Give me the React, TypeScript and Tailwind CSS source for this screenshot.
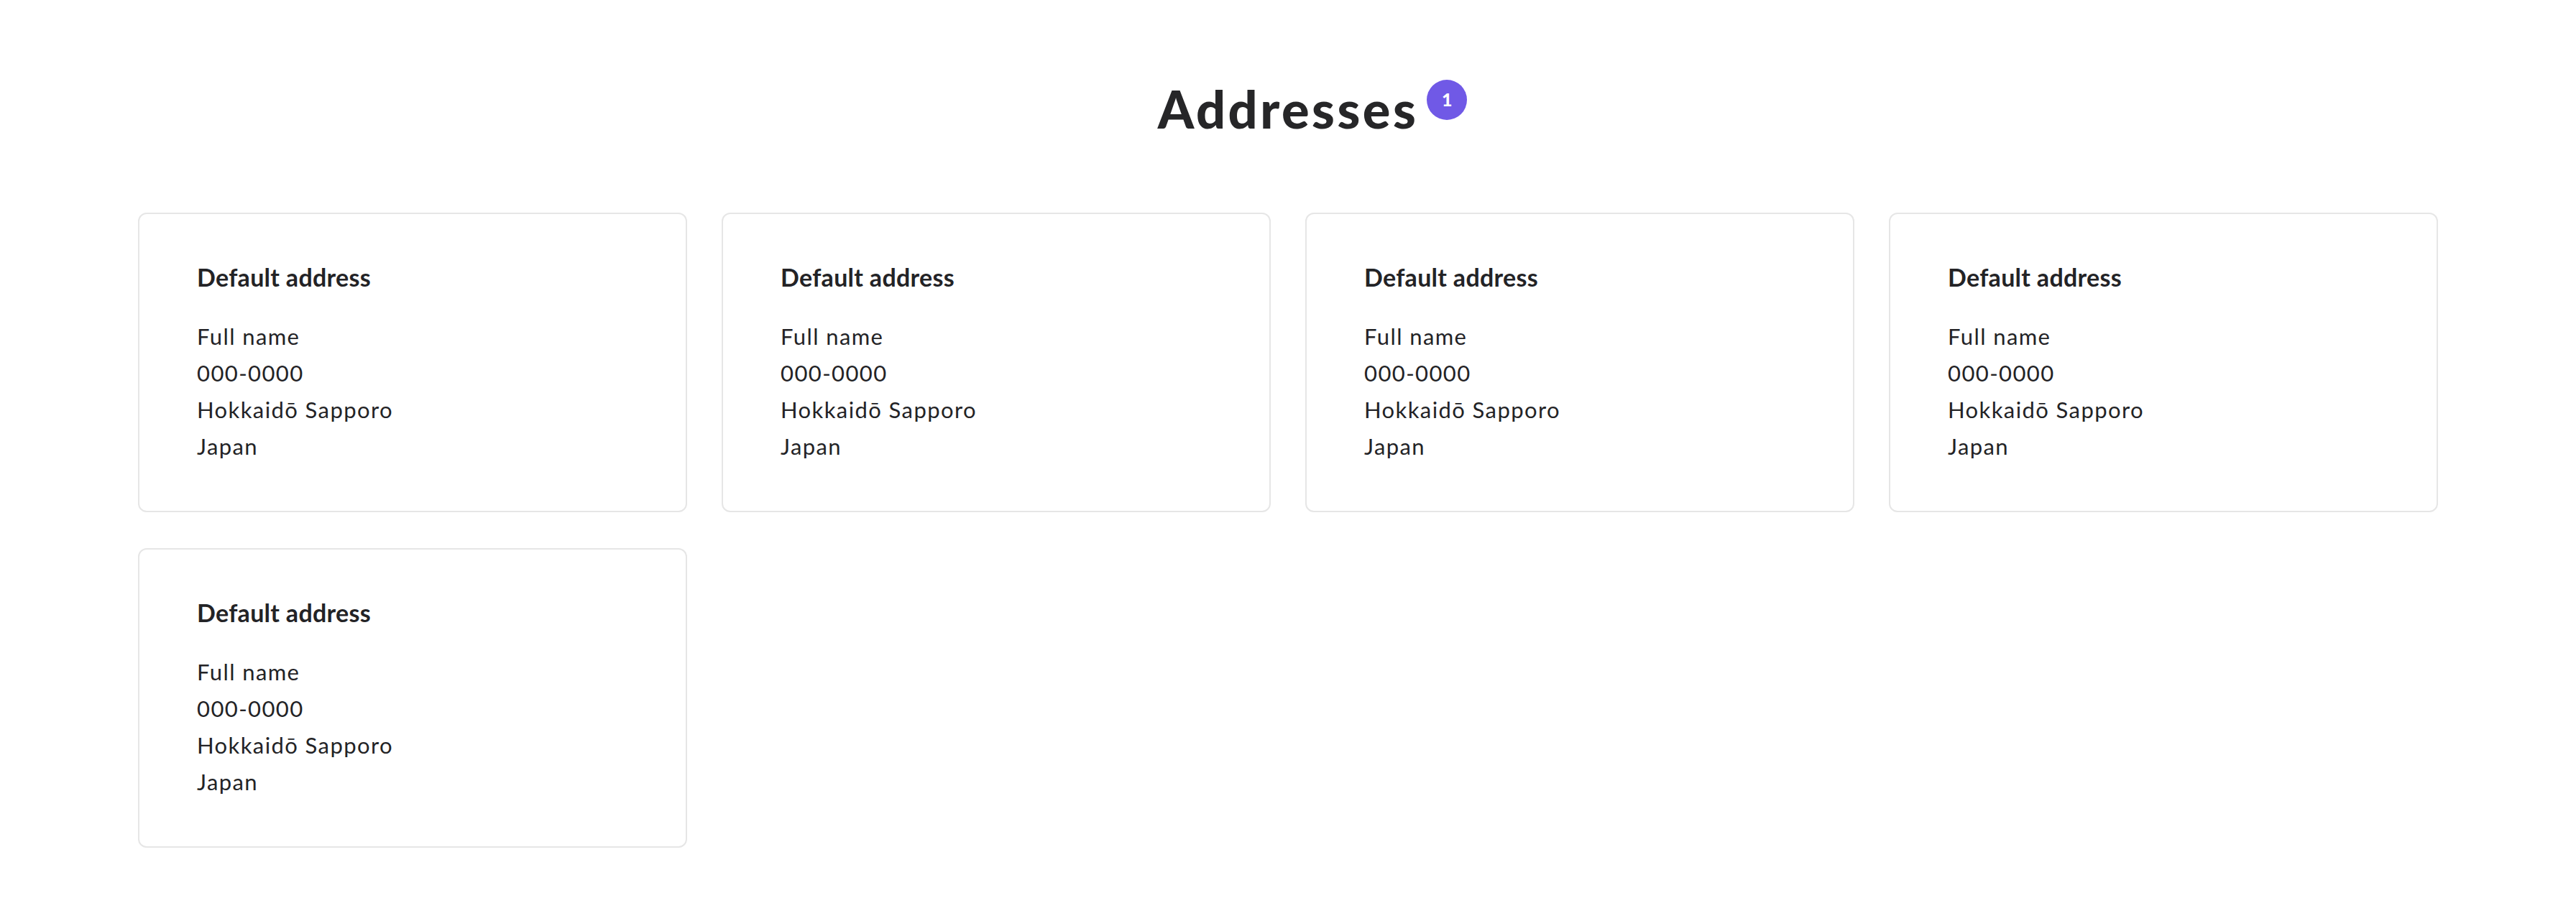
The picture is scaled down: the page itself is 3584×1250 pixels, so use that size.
import React from "react";

type Address = {
  label: string;
  name: string;
  postal: string;
  city: string;
  country: string;
};

const addresses: Address[] = Array.from({ length: 5 }, () => ({
  label: "Default address",
  name: "Full name",
  postal: "000-0000",
  city: "Hokkaidō Sapporo",
  country: "Japan",
}));

const AddressCard: React.FC<{ address: Address }> = ({ address }) => (
  <div className="rounded-[12px] border-2 border-[#e6e6e6] bg-white pt-[62px] pb-[64px] pl-[80px] pr-[40px]">
    <h3 className="text-[34px] font-bold leading-[51px] tracking-[0.3px] text-[#232326]">{address.label}</h3>
    <div className="mt-[32px] text-[31px] leading-[51px] tracking-[1.4px] text-[#232326]">
      <p>{address.name}</p>
      <p>{address.postal}</p>
      <p>{address.city}</p>
      <p>{address.country}</p>
    </div>
  </div>
);

export default function App() {
  return (
    <div className="min-h-[1250px] w-full bg-white font-['Lato','Liberation_Sans',sans-serif]">
      <div className="flex justify-center pt-[108px]">
        <div className="relative">
          <h1 className="text-[72px] font-black leading-[86px] tracking-[3.5px] text-[#262628]">Addresses</h1>
          {/* count badge */}
          <span className="absolute left-full top-[3px] ml-[12px] flex h-[56px] w-[56px] items-center justify-center rounded-full bg-[#7059e6] text-[25px] font-black text-white">
            1
          </span>
        </div>
      </div>

      {/* Address list */}
      <div className="mx-auto mt-[102px] grid w-[3200px] grid-cols-4 gap-x-12 gap-y-[50px]">
        {addresses.map((a, i) => (
          <AddressCard key={i} address={a} />
        ))}
      </div>
    </div>
  );
}
